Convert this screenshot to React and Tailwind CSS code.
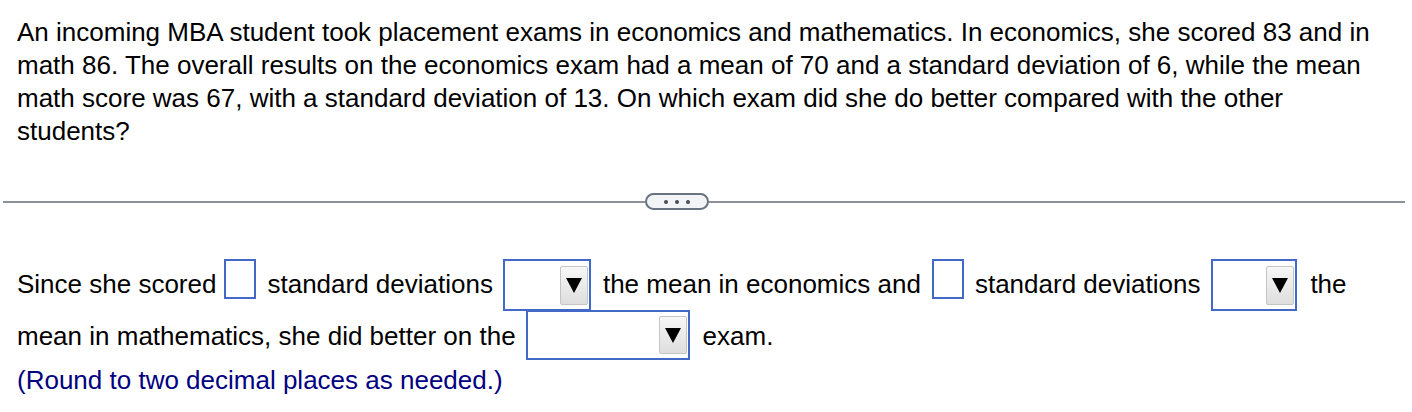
function Box() {
  return <span className="inline-block w-[32px] h-[40px] border-2 border-[#4268c8] bg-white shrink-0" />;
}

function Arrow({ h }) {
  return (
    <span
      className={`flex items-center justify-center w-[28px] border border-[#c4c4c4] bg-gradient-to-b from-[#f7f7f7] to-[#dedede] rounded-[2px] ${h}`}
    >
      <svg width="16" height="15" viewBox="0 0 16 15">
        <polygon points="0,0 16,0 8,15" fill="#000" />
      </svg>
    </span>
  );
}

function Dropdown({ width }) {
  return (
    <span
      className={`flex items-center justify-end shrink-0 h-[52px] border-2 border-[#4268c8] bg-white pr-[1px] ${width}`}
    >
      <Arrow h="h-[39px]" />
    </span>
  );
}

export default function App() {
  return (
    <div className="w-[1412px] h-[412px] bg-white text-black font-['Liberation_Sans',Arial,sans-serif] overflow-hidden">
      {/* Question */}
      <p className="pl-[17px] pr-[20px] pt-[16px] text-[26px] leading-[33px]">
        An incoming MBA student took placement exams in economics and mathematics. In economics, she scored 83 and in
        math 86. The overall results on the economics exam had a mean of 70 and a standard deviation of 6, while the mean
        math score was 67, with a standard deviation of 13. On which exam did she do better compared with the other
        students?
      </p>

      {/* Separator */}
      <div className="mt-[45px] flex items-center h-[17px] pl-[3px] pr-[7px]">
        <div className="w-[642px] h-[2px] bg-[#8a919b]" />
        <div className="flex items-center justify-center gap-[7px] w-[64px] h-[17px] rounded-full border-2 border-[#687280] bg-[#f3f4f6]">
          <span className="w-[4px] h-[4px] rounded-full bg-[#474d56]" />
          <span className="w-[4px] h-[4px] rounded-full bg-[#474d56]" />
          <span className="w-[4px] h-[4px] rounded-full bg-[#474d56]" />
        </div>
        <div className="flex-1 h-[2px] bg-[#8a919b]" />
      </div>

      {/* Answer */}
      <div className="mt-[49px] pl-[17px] text-[26px]">
        <div className="flex items-center h-[51px]">
          <span>Since she scored</span>
          <span className="ml-[8px]"><Box /></span>
          <span className="ml-[11px]">standard deviations</span>
          <span className="ml-[10px] self-start"><Dropdown width="w-[88px]" /></span>
          <span className="ml-[12px]">the mean in economics and</span>
          <span className="ml-[11px]"><Box /></span>
          <span className="ml-[11px]">standard deviations</span>
          <span className="ml-[11px] self-start"><Dropdown width="w-[86px]" /></span>
          <span className="ml-[13px]">the</span>
        </div>
        <div className="flex items-center h-[50px]">
          <span className="mt-[3px]">mean in mathematics, she did better on the</span>
          <span className="ml-[10px]">
            <span className="flex items-center justify-end w-[164px] h-[50px] border-2 border-[#4268c8] bg-white pr-[1px]">
              <Arrow h="h-[38px]" />
            </span>
          </span>
          <span className="ml-[13px] mt-[3px]">exam.</span>
        </div>
        <div className="mt-[8px] leading-[24px] text-[#000080]">(Round to two decimal places as needed.)</div>
      </div>
    </div>
  );
}
